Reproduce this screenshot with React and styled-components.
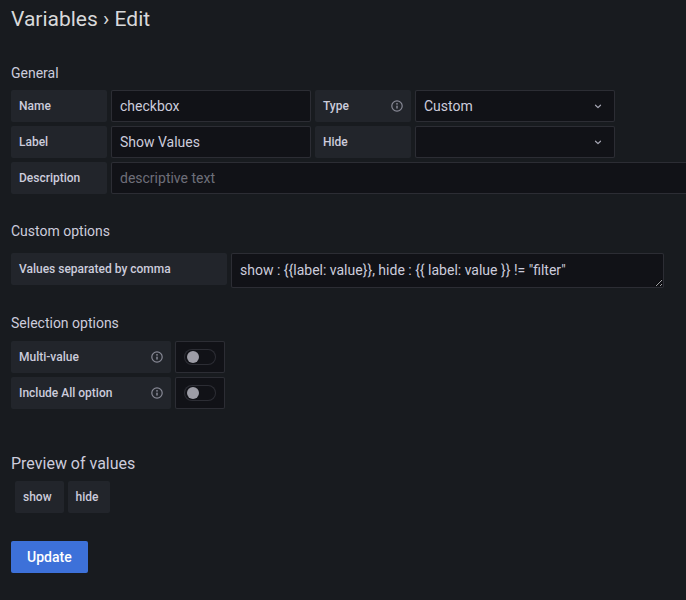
import React from "react";
import styled, { createGlobalStyle } from "styled-components";

const GlobalStyle = createGlobalStyle`
  html, body { margin: 0; padding: 0; background: #181b1f; }
  body { font-family: Roboto, "Noto Sans", sans-serif; color: #ccccdc; }
  * { box-sizing: border-box; }
`;

const Page = styled.div`
  width: 686px;
  height: 600px;
  overflow: hidden;
  padding: 6px 0 0 11px;
  background: #181b1f;
`;

const Title = styled.h2`
  margin: 0;
  font-size: 21px;
  line-height: 26px;
  font-weight: 400;
  color: #d8d9da;
  white-space: nowrap;
`;

const Heading = styled.h5`
  margin: ${(p) => p.$top}px 0 ${(p) => p.$bottom}px 0;
  font-size: ${(p) => p.$size || 14}px;
  line-height: ${(p) => (p.$size === 16 ? 22 : 20)}px;
  font-weight: 400;
  color: #ccccdc;
`;

const Rows = styled.div`
  display: flex;
  flex-direction: column;
  gap: 4px;
`;

const Row = styled.div`
  display: flex;
  align-items: flex-start;
  gap: 4px;
`;

const Label = styled.div`
  width: ${(p) => p.$w}px;
  flex: none;
  height: 32px;
  background: #22252b;
  border-radius: 2px;
  padding: 0 8px;
  display: flex;
  align-items: center;
  justify-content: space-between;
  font-size: 12px;
  font-weight: 500;
  color: #ccccdc;
  white-space: nowrap;
`;

const Input = styled.div`
  width: ${(p) => p.$w}px;
  flex: none;
  height: 32px;
  background: #111217;
  border: 1px solid rgba(204, 204, 220, 0.15);
  border-radius: 2px;
  padding: 0 8px;
  display: flex;
  align-items: center;
  justify-content: space-between;
  font-size: 14px;
  color: ${(p) => (p.$placeholder ? "rgba(204,204,220,0.5)" : "#ccccdc")};
  white-space: nowrap;
`;

const SelectBox = styled(Input)`
  padding-right: 12px;
`;

const TextArea = styled.textarea`
  width: 433px;
  height: 35px;
  flex: none;
  background: #111217;
  border: 1px solid rgba(204, 204, 220, 0.15);
  border-radius: 2px;
  padding: 6px 8px;
  font-family: Roboto, "Noto Sans", sans-serif;
  font-size: 14px;
  line-height: 21px;
  color: #ccccdc;
  resize: both;
  color-scheme: dark;
  outline: none;
  overflow: hidden;
`;

const ToggleBox = styled.div`
  width: 50px;
  height: 32px;
  flex: none;
  background: #111217;
  border: 1px solid rgba(204, 204, 220, 0.15);
  border-radius: 2px;
  display: flex;
  align-items: center;
  justify-content: center;
`;

const Switch = styled.div`
  width: 32px;
  height: 16px;
  border-radius: 8px;
  border: 1px solid rgba(204, 204, 220, 0.15);
  background: #111217;
  display: flex;
  align-items: center;
  padding-left: 2px;
`;

const Knob = styled.span`
  width: 12px;
  height: 12px;
  border-radius: 50%;
  background: #9d9da6;
`;

const Chips = styled.div`
  display: flex;
  gap: 4px;
  margin-left: 4px;
`;

const Chip = styled.div`
  height: 32px;
  background: #22252b;
  border-radius: 2px;
  padding: 0 12px 0 8px;
  display: flex;
  align-items: center;
  font-size: 12px;
  font-weight: 500;
  color: #ccccdc;
`;

const Button = styled.button`
  margin-top: 28px;
  height: 32px;
  padding: 0 16px;
  background: #3d71d9;
  border: none;
  border-radius: 2px;
  color: #ffffff;
  font-family: Roboto, "Noto Sans", sans-serif;
  font-size: 14px;
  font-weight: 500;
`;

const InfoIcon = () => (
  <svg width="12" height="12" viewBox="0 0 12 12" fill="none">
    <circle cx="6" cy="6" r="5.2" stroke="rgba(204,204,220,0.6)" strokeWidth="1.2" />
    <circle cx="6" cy="3.8" r="0.9" fill="rgba(204,204,220,0.6)" />
    <rect x="5.25" y="5.4" width="1.5" height="3.4" rx="0.7" fill="rgba(204,204,220,0.6)" />
  </svg>
);

const Chevron = () => (
  <svg width="8" height="5" viewBox="0 0 8 5" fill="none">
    <path d="M1.5 1.2l2.5 2.4 2.5-2.4" stroke="rgba(204,204,220,0.8)" strokeWidth="1.2" strokeLinecap="round" strokeLinejoin="round" />
  </svg>
);

export default function App() {
  return (
    <>
      <GlobalStyle />
      <Page>
        <Title>Variables › Edit</Title>

        <Heading $top={31} $bottom={7}>General</Heading>
        <Rows>
          <Row>
            <Label $w={96}>Name</Label>
            <Input $w={200}>checkbox</Input>
            <Label $w={96}>
              Type
              <InfoIcon />
            </Label>
            <SelectBox $w={200}>
              Custom
              <Chevron />
            </SelectBox>
          </Row>
          <Row>
            <Label $w={96}>Label</Label>
            <Input $w={200}>Show Values</Input>
            <Label $w={96}>Hide</Label>
            <SelectBox $w={200}>
              <span />
              <Chevron />
            </SelectBox>
          </Row>
          <Row>
            <Label $w={96}>Description</Label>
            <Input $w={620} $placeholder>descriptive text</Input>
          </Row>
        </Rows>

        <Heading $top={27} $bottom={12}>Custom options</Heading>
        <Row>
          <Label $w={216}>Values separated by comma</Label>
          <TextArea
            readOnly
            value={'show : {{label: value}}, hide : {{ label: value }} != "filter"'}
          />
        </Row>

        <Heading $top={25} $bottom={8}>Selection options</Heading>
        <Rows>
          <Row>
            <Label $w={160}>
              Multi-value
              <InfoIcon />
            </Label>
            <ToggleBox>
              <Switch>
                <Knob />
              </Switch>
            </ToggleBox>
          </Row>
          <Row>
            <Label $w={160}>
              Include All option
              <InfoIcon />
            </Label>
            <ToggleBox>
              <Switch>
                <Knob />
              </Switch>
            </ToggleBox>
          </Row>
        </Rows>

        <Heading $size={16} $top={44} $bottom={6}>Preview of values</Heading>
        <Chips>
          <Chip>show</Chip>
          <Chip>hide</Chip>
        </Chips>

        <Button>Update</Button>
      </Page>
    </>
  );
}
